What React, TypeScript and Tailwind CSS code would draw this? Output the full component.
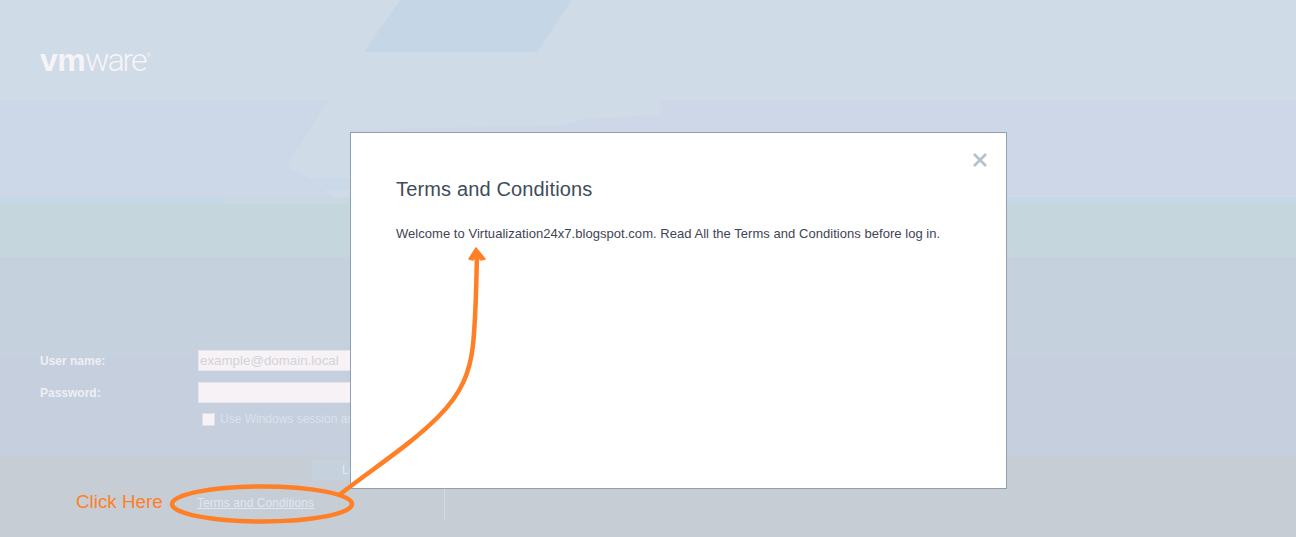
export default function App() {
  return (
    <div className="relative h-[537px] w-[1296px] overflow-hidden bg-[#cfdbe7] font-['Liberation_Sans',Arial,sans-serif]">
      {/* Faded background artwork */}
      <svg className="absolute inset-0" width="1296" height="537" viewBox="0 0 1296 537">
        <rect x="0" y="0" width="1296" height="537" fill="#cfdbe7" />
        <polygon points="364,52 400,0 572,0 537,52" fill="#c5d7e7" />
        <polygon points="0,100 328,100 286,167 309,178 333,197 0,197" fill="#ccd7e8" />
        <polygon points="660,100 1296,100 1296,196 350,196 350,130 564,125 590,118 660,115" fill="#cdd7e8" />
        <polygon points="309,178 350,178 350,190 326,190" fill="#c9d9e8" />
        <rect x="0" y="197" width="1296" height="8" fill="#c6d8e6" />
        <polygon points="224,197 350,197 350,205 224,205" fill="#c9d8e3" />
        <rect x="0" y="204" width="1296" height="54" fill="#c5d6dd" />
        <rect x="0" y="257" width="1296" height="100" fill="#c5d2de" />
        <rect x="0" y="357" width="1296" height="100" fill="#c5cfde" />
        <rect x="0" y="456" width="1296" height="81" fill="#c6cdd5" />
      </svg>

      {/* vmware logo */}
      <div className="absolute left-[40px] top-[42px] flex items-start text-[32px] leading-[36px] text-[#f7f4f8]">
        <span className="font-bold tracking-[-0.5px]">vm</span>
        <span className="font-['Roboto',sans-serif] font-light tracking-[-2px]">ware</span>
        <span className="ml-[1px] mt-[10px] text-[6px] leading-[6px]">®</span>
      </div>

      {/* Login form behind the dialog */}
      <div className="absolute left-[40px] top-[350px] flex w-[400px] flex-col text-xs">
        <div className="flex h-[21px] items-center">
          <label className="w-[158px] font-bold text-[#eef0f5]">User name:</label>
          <div className="flex h-[21px] w-[200px] items-center border border-[#e6e6ea] bg-[#f6f2f6] px-[1px] text-[13.33px] text-[#d3d3d8]">
            example@domain.local
          </div>
        </div>
        <div className="mt-[11px] flex h-[21px] items-center">
          <label className="w-[158px] font-bold text-[#eef0f5]">Password:</label>
          <div className="h-[21px] w-[200px] border border-[#e6e6ea] bg-[#f6f2f6]" />
        </div>
        <div className="ml-[162px] mt-[8px] flex items-center gap-[5px]">
          <div className="h-[13px] w-[13px] border border-[#dfe0e6] bg-[#f6f2f6]" />
          <span className="text-[#dbe2ec]">Use Windows session authentication</span>
        </div>
        <div className="ml-[272px] mt-[33px] flex h-[20px] w-[80px] items-center bg-[#c5d1dc] pl-[30px] text-[#e4e9ef]">
          Login
        </div>
      </div>

      {/* Footer link */}
      <a className="absolute left-[197px] top-[495px] text-xs tracking-[0.05px] text-[#e0e7f4] underline">Terms and Conditions</a>
      <div className="absolute left-[444px] top-[489px] h-[31px] w-px bg-[#d3dae2]" />

      {/* Dialog */}
      <div className="absolute left-[350px] top-[132px] h-[357px] w-[657px] border border-[#8fa0b0] bg-white pl-[45px] pt-[44px]">
        <h2 className="text-xl leading-[24px] tracking-[0.15px] text-[#3f4c5a]">Terms and Conditions</h2>
        <p className="mt-[24px] text-[13px] leading-[18px] tracking-[0.04px] text-[#3f4455]">
          Welcome to Virtualization24x7.blogspot.com. Read All the Terms and Conditions before log in.
        </p>
        <svg className="absolute left-[622px] top-[20px]" width="14" height="14" viewBox="0 0 14 14">
          <path d="M1 1 L13 13 M13 1 L1 13" stroke="#b4c2cd" strokeWidth="2.6" fill="none" />
        </svg>
      </div>

      {/* Hand drawn annotation */}
      <span className="absolute left-[76px] top-[492px] text-[18.8px] leading-[20px] text-[#ff7f27]">Click Here</span>
      <svg className="absolute inset-0 pointer-events-none" width="1296" height="537" viewBox="0 0 1296 537">
        <ellipse cx="262" cy="504" rx="90" ry="17.5" fill="none" stroke="#ff7f27" strokeWidth="4.5" />
        <path
          d="M339 495 C375 467 410 445 438 417 C462 393 470 372 473 345 C476 315 476 290 477 256"
          fill="none"
          stroke="#ff7f27"
          strokeWidth="4.5"
        />
        <path d="M476 248 L485 259 L481 260 L477 256 L473 260 L469 259 Z" fill="#ff7f27" stroke="#ff7f27" strokeWidth="1.5" strokeLinejoin="round" />
      </svg>
    </div>
  );
}
